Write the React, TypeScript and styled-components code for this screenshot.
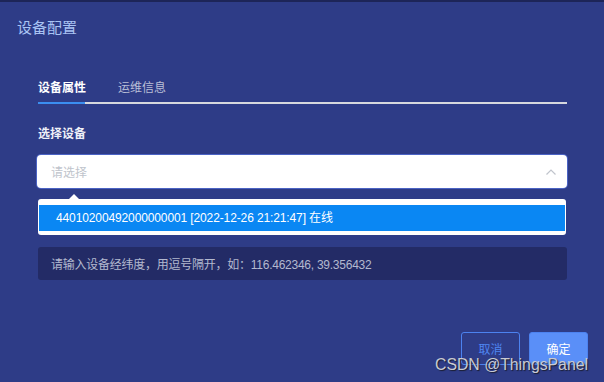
import styled, { createGlobalStyle } from "styled-components";

const GlobalStyle = createGlobalStyle`
  html, body {
    margin: 0;
    padding: 0;
    background: #2e3c87;
  }
  body {
    font-family: "Liberation Sans", "Noto Sans CJK SC", sans-serif;
  }
`;

const Dialog = styled.div`
  position: relative;
  width: 604px;
  height: 382px;
  box-sizing: border-box;
  background: #2e3c87;
  border-top: 2px solid #1d2558;
  overflow: hidden;
`;

const Header = styled.div`
  padding: 16px 0 0 17px;
  height: 32px;
  font-size: 15px;
  line-height: 20px;
  color: #a9c3f3;
`;

const Body = styled.div`
  padding: 27px 37px 0 38px;
`;

const Tabs = styled.div`
  display: flex;
  gap: 32px;
  border-bottom: 2px solid #d6d8de;
  height: 27px;
  box-sizing: border-box;
`;

const Tab = styled.div<{ $active?: boolean }>`
  position: relative;
  font-size: 12px;
  line-height: 16px;
  padding-top: 3px;
  color: ${(p) => (p.$active ? "#ffffff" : "#b9bfd6")};
  font-weight: ${(p) => (p.$active ? 600 : 400)};
  &::after {
    content: "";
    display: ${(p) => (p.$active ? "block" : "none")};
    position: absolute;
    left: 0;
    right: 1px;
    bottom: -2px;
    height: 2px;
    background: #3b8ef0;
  }
`;

const Label = styled.div`
  margin-top: 22px;
  font-size: 12px;
  line-height: 16px;
  color: #eef0f8;
  font-weight: 600;
`;

const SelectBox = styled.div`
  margin-top: 13px;
  margin-left: -1px;
  height: 33px;
  box-sizing: border-box;
  background: #ffffff;
  border-radius: 4px;
  box-shadow: 0 0 0 1px #4b63c4;
  display: flex;
  align-items: center;
  justify-content: space-between;
  padding: 0 10px 0 14px;
`;

const Placeholder = styled.span`
  font-size: 12px;
  color: #c0c4cc;
`;

const Menu = styled.div`
  position: relative;
  margin-top: 11px;
  background: #ffffff;
  border-radius: 3px;
  padding: 6px 1px 4px 1px;
  margin-right: 1px;
  &::before {
    content: "";
    position: absolute;
    top: -5px;
    left: 31px;
    border-left: 5px solid transparent;
    border-right: 5px solid transparent;
    border-bottom: 5px solid #ffffff;
  }
`;

const MenuItem = styled.div`
  height: 26px;
  background: #0a87f3;
  color: #ffffff;
  font-size: 12px;
  letter-spacing: -0.12px;
  line-height: 26px;
  padding-left: 17px;
`;

const CoordInput = styled.div`
  margin-top: 12px;
  height: 33px;
  background: #232b66;
  border-radius: 3px;
  display: flex;
  align-items: center;
  padding-left: 13px;
  font-size: 12px;
  letter-spacing: -0.25px;
  color: #b3b9cf;
`;

const Footer = styled.div`
  display: flex;
  justify-content: flex-end;
  gap: 9px;
  padding: 52px 16px 0 0;
`;

const Button = styled.button<{ $primary?: boolean }>`
  width: 59px;
  height: 33px;
  box-sizing: border-box;
  border-radius: 3px;
  font-family: inherit;
  font-size: 12px;
  cursor: pointer;
  border: 1px solid #4c82f0;
  background: ${(p) => (p.$primary ? "#5a8ff8" : "transparent")};
  color: ${(p) => (p.$primary ? "#ffffff" : "#4f86f2")};
`;

const Watermark = styled.div`
  position: absolute;
  right: 16px;
  bottom: 8px;
  font-size: 15.8px;
  color: #c9cbd3;
  text-shadow: 1px 1px 1px #1a1d2e;
  pointer-events: none;
`;

function ChevronUp() {
  return (
    <svg width="12" height="8" viewBox="0 0 12 8" fill="none">
      <path d="M1.5 6.5L6 2L10.5 6.5" stroke="#c0c4cc" strokeWidth="1.2" />
    </svg>
  );
}

export default function App() {
  return (
    <>
      <GlobalStyle />
      <Dialog>
        <Header>设备配置</Header>
        <Body>
          <Tabs>
            <Tab $active>设备属性</Tab>
            <Tab>运维信息</Tab>
          </Tabs>
          <Label>选择设备</Label>
          <SelectBox>
            <Placeholder>请选择</Placeholder>
            <ChevronUp />
          </SelectBox>
          <Menu>
            <MenuItem>44010200492000000001 [2022-12-26 21:21:47] 在线</MenuItem>
          </Menu>
          <CoordInput>请输入设备经纬度，用逗号隔开，如：116.462346, 39.356432</CoordInput>
        </Body>
        <Footer>
          <Button>取消</Button>
          <Button $primary>确定</Button>
        </Footer>
        <Watermark>CSDN @ThingsPanel</Watermark>
      </Dialog>
    </>
  );
}
